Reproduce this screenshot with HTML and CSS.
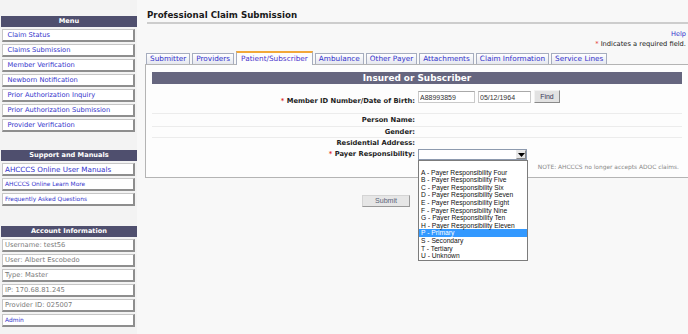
FILE: index.html
```html
<!DOCTYPE html>
<html>
<head>
<meta charset="utf-8">
<title>Professional Claim Submission</title>
<link rel="stylesheet" href="styles.css">
</head>
<body>
<div class="page">
  <aside class="sidebar">
    <div class="box">
      <div class="box-head">Menu</div>
      <a class="item" href="#">Claim Status</a>
      <a class="item" href="#">Claims Submission</a>
      <a class="item" href="#">Member Verification</a>
      <a class="item" href="#">Newborn Notification</a>
      <a class="item" href="#">Prior Authorization Inquiry</a>
      <a class="item" href="#">Prior Authorization Submission</a>
      <a class="item" href="#">Provider Verification</a>
    </div>
    <div class="box box-support">
      <div class="box-head">Support and Manuals</div>
      <a class="item item-tight" href="#">AHCCCS Online User Manuals</a>
      <a class="item item-tight item-small" href="#">AHCCCS Online Learn More</a>
      <a class="item item-tight item-small" href="#">Frequently Asked Questions</a>
    </div>
    <div class="box box-account">
      <div class="box-head">Account Information</div>
      <div class="item item-tight item-info">Username: test56</div>
      <div class="item item-tight item-info">User: Albert Escobedo</div>
      <div class="item item-tight item-info">Type: Master</div>
      <div class="item item-tight item-info">IP: 170.68.81.245</div>
      <div class="item item-tight item-info">Provider ID: 025007</div>
      <a class="item item-tight item-small" href="#">Admin</a>
    </div>
  </aside>

  <main class="main">
    <h1 class="title">Professional Claim Submission</h1>
    <div class="help-row"><a href="#" class="help">Help</a></div>
    <div class="req-row"><span class="req">*</span> Indicates a required field.</div>

    <nav class="tabs">
      <a class="tab" href="#">Submitter</a>
      <a class="tab" href="#">Providers</a>
      <a class="tab tab-active" href="#">Patient/Subscriber</a>
      <a class="tab" href="#">Ambulance</a>
      <a class="tab" href="#">Other Payer</a>
      <a class="tab" href="#">Attachments</a>
      <a class="tab" href="#">Claim Information</a>
      <a class="tab" href="#">Service Lines</a>
    </nav>

    <section class="panel">
      <div class="section-bar">Insured or Subscriber</div>
      <div class="row row-member">
        <div class="label label-member"><span class="req">*</span> Member ID Number/Date of Birth:</div>
        <div class="value value-member">
          <input class="field field-id" type="text" value="A88993859">
          <input class="field field-dob" type="text" value="05/12/1964">
          <button class="btn-find" type="button">Find</button>
        </div>
      </div>
      <div class="row row-name">
        <div class="label">Person Name:</div>
        <div class="value"></div>
      </div>
      <div class="row row-gender">
        <div class="label">Gender:</div>
        <div class="value"></div>
      </div>
      <div class="row row-address">
        <div class="label">Residential Address:</div>
        <div class="value"></div>
      </div>
      <div class="row row-payer">
        <div class="label"><span class="req">*</span> Payer Responsibility:</div>
        <div class="value">
          <div class="select">
            <span class="select-arrow">
              <svg width="7" height="4" viewBox="0 0 7 4"><path d="M0 0H7L3.5 4Z" fill="#000"/></svg>
            </span>
            <div class="listbox">
              <div class="opt">&nbsp;</div>
              <div class="opt">A - Payer Responsibility Four</div>
              <div class="opt">B - Payer Responsibility Five</div>
              <div class="opt">C - Payer Responsibility Six</div>
              <div class="opt">D - Payer Responsibility Seven</div>
              <div class="opt">E - Payer Responsibility Eight</div>
              <div class="opt">F - Payer Responsibility Nine</div>
              <div class="opt">G - Payer Responsibility Ten</div>
              <div class="opt">H - Payer Responsibility Eleven</div>
              <div class="opt opt-selected">P - Primary</div>
              <div class="opt">S - Secondary</div>
              <div class="opt">T - Tertiary</div>
              <div class="opt">U - Unknown</div>
            </div>
          </div>
        </div>
      </div>
      <div class="row row-note">
        <div class="note">NOTE: AHCCCS no longer accepts ADOC claims.</div>
      </div>
    </section>

    <div class="actions">
      <button class="btn-submit" type="button">Submit</button>
    </div>
  </main>
</div>
</body>
</html>
```

FILE: styles.css
```css
* { box-sizing: border-box; }

html, body {
  margin: 0;
  padding: 0;
}

body {
  width: 688px;
  height: 334px;
  overflow: hidden;
  background: #f8f8f8;
  font-family: "DejaVu Sans", Verdana, sans-serif;
  color: #222;
}

.page {
  display: flex;
  align-items: flex-start;
}

/* ---------- sidebar ---------- */
.sidebar {
  width: 137px;
  flex: none;
  height: 334px;
  padding-top: 16px;
  background: #f3f3f3;
}

.box-support { margin-top: 18px; }
.box-account { margin-top: 20px; }

.box-head {
  margin-left: 1px;
  height: 11px;
  line-height: 11px;
  background: #4f4f6e;
  color: #fff;
  font-weight: bold;
  font-size: 6.6px;
  text-align: center;
  white-space: nowrap;
}

.item {
  display: block;
  height: 13px;
  margin: 2px 2px 0 2px;
  padding-left: 4.5px;
  background: #fff;
  border: 1px solid #c6c6c6;
  border-right: 2px solid #8e8e8e;
  border-bottom: 2px solid #8e8e8e;
  font-size: 6.7px;
  line-height: 11px;
  color: #3333cc;
  text-decoration: none;
  white-space: nowrap;
  overflow: hidden;
}

.item-tight { padding-left: 2px; font-size: 7.2px; }
.item-small { font-size: 5.9px; }
.item-info { color: #7a7a7a; font-size: 6.75px; }

/* ---------- main ---------- */
.main {
  flex: 1;
  min-width: 0;
  margin-left: 8px;
}

.title {
  margin: 10px 0 0 2px;
  padding-bottom: 2px;
  border-bottom: 2px solid #cdcdcd;
  font-size: 8.7px;
  line-height: 10px;
  font-weight: bold;
  color: #1a1a1a;
  white-space: nowrap;
}

.help-row {
  margin-top: 6px;
  padding-right: 2px;
  text-align: right;
  font-size: 6.6px;
  line-height: 9px;
}

.help { color: #3333cc; text-decoration: none; }

.req-row {
  margin-top: 1px;
  padding-right: 2px;
  text-align: right;
  font-size: 6.7px;
  line-height: 9px;
  color: #222;
}

.req { color: #e23030; }

/* ---------- tabs ---------- */
.tabs {
  display: flex;
  align-items: flex-end;
  gap: 2px;
  height: 13px;
  margin-top: 2px;
  padding-left: 1px;
}

.tab {
  position: relative;
  display: block;
  height: 11px;
  padding: 0 3px;
  border: 1px solid #a6adbf;
  border-bottom: 0;
  background: linear-gradient(#ffffff, #e5e7ef);
  color: #3333cc;
  font-size: 7.3px;
  line-height: 10px;
  text-decoration: none;
  white-space: nowrap;
}

.tab-active {
  height: 14px;
  margin-bottom: -1px;
  padding: 0 4px;
  border-top: 2px solid #f2a838;
  background: #fdfdfd;
  color: #4a33cc;
  line-height: 12px;
  z-index: 2;
}

/* ---------- panel ---------- */
.panel {
  position: relative;
  margin-right: -1px;
  padding: 7px 6px 0 6px;
  border: 1px solid #b4b4b4;
  background: #fdfdfd;
}

.section-bar {
  height: 12px;
  line-height: 12px;
  background: #66667f;
  color: #fff;
  font-weight: bold;
  font-size: 8.9px;
  text-align: center;
}

.row {
  display: flex;
  align-items: flex-start;
}

.label {
  width: 263px;
  flex: none;
  text-align: right;
  font-weight: bold;
  font-size: 6.75px;
  white-space: nowrap;
  color: #1e1e1e;
}

.value {
  flex: 1;
  display: flex;
  align-items: flex-start;
  padding-left: 3px;
}

.row-member { height: 30px; border-bottom: 1px solid #ececec; }
.label-member { padding-top: 13px; line-height: 9px; }
.value-member { padding-top: 6px; gap: 3px; }

.row-name { height: 13px; border-bottom: 1px solid #ececec; }
.row-name .label { line-height: 12px; }

.row-gender { height: 11px; border-bottom: 1px solid #ececec; }
.row-gender .label { line-height: 10px; }

.row-address { height: 10px; }
.row-address .label { line-height: 10px; }

.row-payer { height: 13px; }
.row-payer .label { line-height: 13px; }
.row-payer .value { padding-top: 1px; }

.row-note { height: 16px; justify-content: flex-end; }

.note {
  padding-right: 3px;
  font-size: 5.9px;
  line-height: 12px;
  color: #888;
  white-space: nowrap;
}

.field {
  height: 12px;
  margin: 1px 0 0 0;
  padding: 0 1px;
  border: 1px solid #cacaca;
  border-top-color: #a9a9a9;
  background: #fff;
  font-family: "Liberation Sans", Arial, sans-serif;
  font-size: 7px;
  line-height: 10px;
  color: #333;
  outline: none;
}

.field-id { width: 57px; }
.field-dob { width: 53px; }

.btn-find {
  width: 26px;
  height: 13px;
  padding: 0;
  margin: 0;
  border: 1px solid;
  border-color: #f2f2f2 #8a8a8a #8a8a8a #f2f2f2;
  background: #e2e2e2;
  font-family: "Liberation Sans", Arial, sans-serif;
  font-size: 6.9px;
  line-height: 11px;
  color: #333355;
}

/* ---------- select + open list ---------- */
.select {
  position: relative;
  display: flex;
  justify-content: flex-end;
  align-items: stretch;
  width: 109px;
  height: 11px;
  border: 1px solid #8d9aae;
  background: #fff;
}

.select-arrow {
  display: flex;
  align-items: center;
  justify-content: center;
  width: 10px;
  border: 1px solid #a0a0a0;
  border-color: #eaeaea #888 #888 #eaeaea;
  background: #e6e6e6;
}

.listbox {
  position: absolute;
  top: calc(100% + 1px);
  left: -1px;
  width: 110px;
  border: 1px solid #7c7c7c;
  background: #fff;
  z-index: 5;
  font-family: "Liberation Sans", Arial, sans-serif;
  font-size: 6.7px;
  color: #111;
}

.opt {
  height: 7.6px;
  line-height: 7.6px;
  padding-left: 2px;
  white-space: nowrap;
}

.opt-selected {
  background: #3399ff;
  color: #fff;
}

/* ---------- submit ---------- */
.actions {
  padding: 17px 0 0 217px;
}

.btn-submit {
  display: block;
  width: 48px;
  height: 12px;
  padding: 0;
  margin: 0;
  border: 1px solid;
  border-color: #d4d4d4 #999 #999 #d4d4d4;
  background: #e6e6e6;
  font-family: "Liberation Sans", Arial, sans-serif;
  font-size: 7.1px;
  line-height: 10px;
  color: #5a6478;
}
```
